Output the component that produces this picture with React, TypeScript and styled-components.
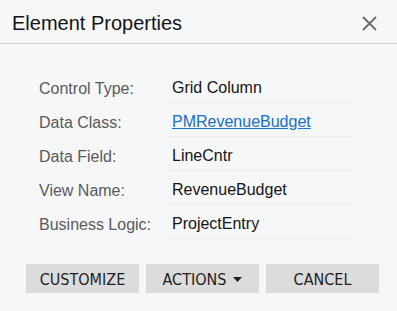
import { Fragment } from "react";
import styled, { createGlobalStyle } from "styled-components";

const GlobalStyle = createGlobalStyle`
  html, body {
    margin: 0;
    padding: 0;
    background: #f6f7f9;
  }
  body {
    font-family: "Liberation Sans", Arial, sans-serif;
  }
`;

const Dialog = styled.div`
  width: 397px;
  height: 311px;
  background: #f6f7f9;
  display: flex;
  flex-direction: column;
`;

const Header = styled.div`
  height: 43px;
  border-bottom: 1px solid #cfd0d2;
  display: flex;
  align-items: center;
  justify-content: space-between;
  padding: 0 20px 0 12px;
`;

const Title = styled.h2`
  margin: 4px 0 0;
  font-size: 20px;
  font-weight: 400;
  color: #141414;
`;

const CloseButton = styled.button`
  border: none;
  background: none;
  padding: 0;
  margin-top: 3px;
  width: 16px;
  height: 16px;
  display: flex;
  align-items: center;
  justify-content: center;
  cursor: pointer;
`;

const Properties = styled.div`
  display: grid;
  grid-template-columns: 129px 184px;
  grid-auto-rows: 34px;
  padding: 25px 0 0 39px;
`;

const Label = styled.div`
  display: flex;
  align-items: flex-end;
  padding-bottom: 5px;
  line-height: 18px;
  font-size: 16px;
  color: #5a5a5a;
`;

const Value = styled.div`
  display: flex;
  align-items: flex-end;
  padding: 0 0 5px 4px;
  line-height: 18px;
  font-size: 16px;
  color: #141414;
  border-bottom: 1px solid #ebecee;
`;

const Link = styled.a`
  color: #1a6fc7;
  text-decoration: underline;
`;

const Footer = styled.div`
  display: flex;
  gap: 7px;
  padding: 25px 0 0 26px;
`;

const Button = styled.button`
  width: 113px;
  height: 29px;
  border: none;
  background: #dcdcdc;
  color: #1f1f1f;
  font-family: "DejaVu Sans Condensed", "Liberation Sans", sans-serif;
  font-size: 16px;
  display: flex;
  align-items: center;
  justify-content: center;
  gap: 7px;
  padding: 2px 0 0;
  cursor: pointer;
`;

const rows: { label: string; value: string; link?: boolean }[] = [
  { label: "Control Type:", value: "Grid Column" },
  { label: "Data Class:", value: "PMRevenueBudget", link: true },
  { label: "Data Field:", value: "LineCntr" },
  { label: "View Name:", value: "RevenueBudget" },
  { label: "Business Logic:", value: "ProjectEntry" },
];

export default function App() {
  return (
    <>
      <GlobalStyle />
      <Dialog>
        <Header>
          <Title>Element Properties</Title>
          <CloseButton aria-label="Close">
            <svg width="15" height="15" viewBox="0 0 15 15">
              <path d="M1 1 L14 14 M14 1 L1 14" stroke="#6b6b6b" strokeWidth="1.8" />
            </svg>
          </CloseButton>
        </Header>
        <Properties>
          {rows.map((r) => (
            <Fragment key={r.label}>
              <Label>{r.label}</Label>
              <Value>
                {r.link ? <Link href="#">{r.value}</Link> : r.value}
              </Value>
            </Fragment>
          ))}
        </Properties>
        <Footer>
          <Button>CUSTOMIZE</Button>
          <Button>
            ACTIONS
            <svg width="9" height="5" viewBox="0 0 9 5">
              <path d="M0 0 H9 L4.5 5 Z" fill="#1f1f1f" />
            </svg>
          </Button>
          <Button>CANCEL</Button>
        </Footer>
      </Dialog>
    </>
  );
}
